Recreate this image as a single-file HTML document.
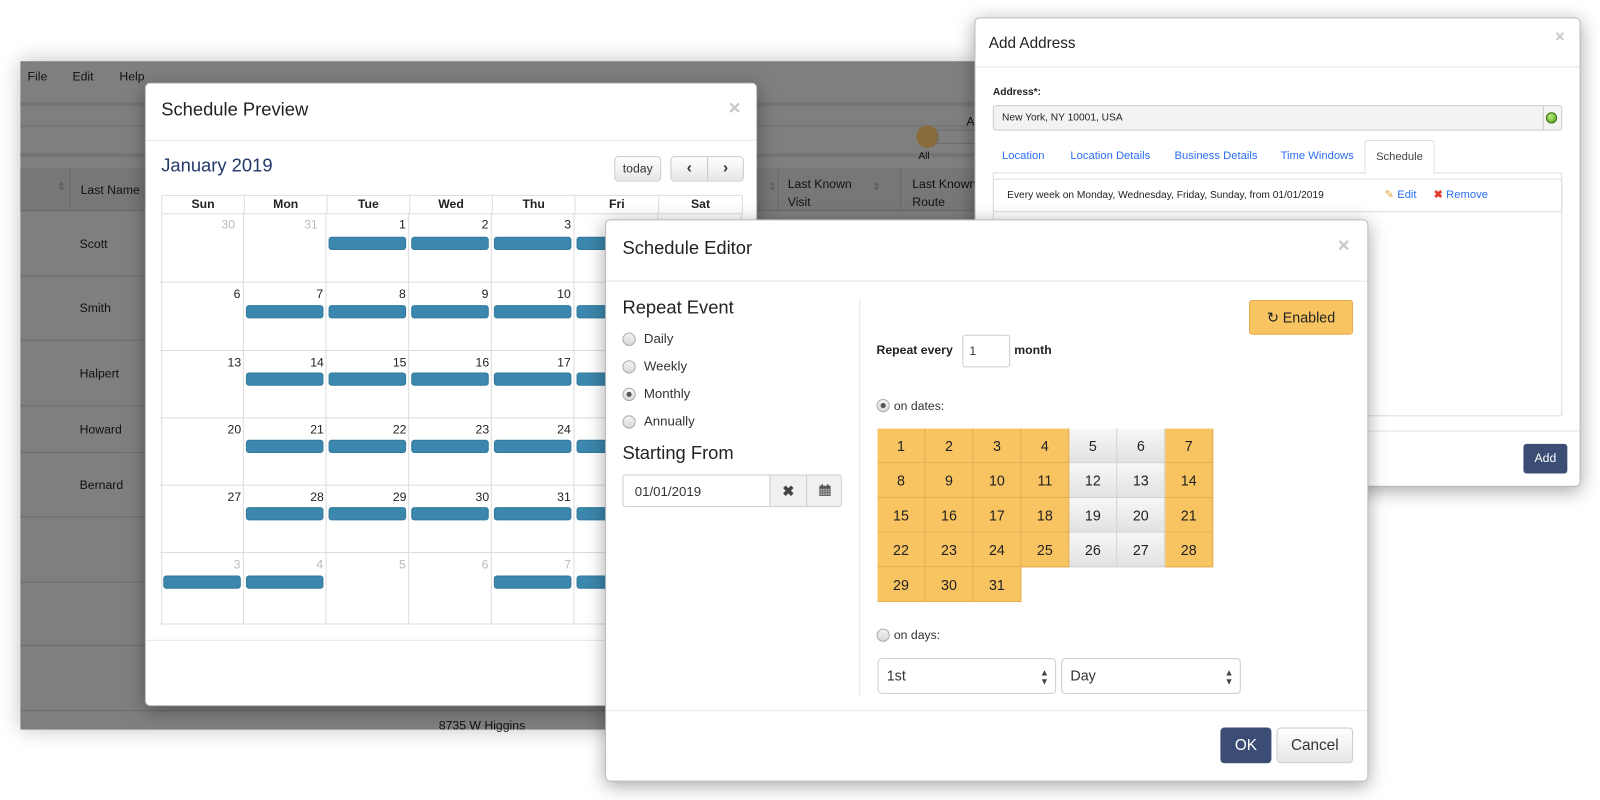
<!DOCTYPE html>
<html><head><meta charset="utf-8"><style>
*{box-sizing:border-box;margin:0;padding:0}
html,body{width:1600px;height:800px;overflow:hidden}
body{background:#fff;position:relative;font-family:"Liberation Sans",Arial,sans-serif;color:#333}
#w{position:absolute;left:0;top:0;width:1568px;height:784px;transform:scale(1.0204);transform-origin:0 0}
.a{position:absolute}
.bg{left:20px;top:60px;width:940px;height:655px;background:#7f7f7f;box-shadow:0 0 20px rgba(0,0,0,.25)}
.t{font-size:12px;color:#111}
.hl{height:1px;background:#6e6e6e}
.modal{background:#fff;border-radius:5px;box-shadow:0 4px 18px rgba(0,0,0,.35);border:1px solid #bbb}
.x{color:#c8c8c8;font-size:20px;font-weight:bold}
.cell{position:absolute;border-right:1px solid #ddd;border-bottom:1px solid #ddd}
.num{position:absolute;font-size:12px;right:5px;top:4px;color:#222}
.bar{position:absolute;height:13px;background:#3b87ad;border:1px solid #33799c;border-radius:3px}
.btn{position:absolute;border:1px solid #ccc;border-radius:4px;background:linear-gradient(#fff,#e6e6e6);font-size:12px;text-align:center}
.radio{position:absolute;width:13px;height:13px;border-radius:50%;border:1px solid #aaa;background:linear-gradient(#f4f4f4,#d8d8d8)}
.radio.on::after{content:"";position:absolute;left:3px;top:3px;width:5px;height:5px;border-radius:50%;background:#555}
.d{position:absolute;width:47px;height:34px;font-size:14px;text-align:center;line-height:34px;color:#222;border-right:1px solid #e2ad4e;border-bottom:1px solid #e2ad4e;background:#f8c462}
.d.g{background:linear-gradient(#f7f7f7,#e2e2e2);border-color:#ccc}
.tab{position:absolute;font-size:11px;color:#2a6ef5;top:146px}
</style></head><body><div id="w">

<div class="a bg">
 <div class="a t" style="left:7px;top:8px">File</div>
 <div class="a t" style="left:51px;top:8px">Edit</div>
 <div class="a t" style="left:97px;top:8px">Help</div>
 <div class="a" style="left:0;top:40px;width:940px;height:4px;background:#747474"></div>
 <div class="a hl" style="left:0;top:63px;width:940px"></div>
 <div class="a" style="left:0;top:90px;width:940px;height:4px;background:#747474"></div>
 <div class="a" style="left:0;top:105px;width:940px;height:42px;background:#777;border-bottom:1px solid #6a6a6a"></div>
 <div class="a" style="left:48px;top:105px;width:1px;height:42px;background:#6a6a6a"></div>
 <div class="a t" style="left:36px;top:118px;color:#555;font-size:10px">⇕</div>
 <div class="a t" style="left:59px;top:119px">Last Name</div>
 <div class="a t" style="left:752px;top:111px;line-height:18px">Last Known<br>Visit</div>
 <div class="a t" style="left:835px;top:118px;color:#555;font-size:10px">⇕</div>
 <div class="a" style="left:862px;top:105px;width:1px;height:42px;background:#6a6a6a"></div>
 <div class="a t" style="left:733px;top:118px;color:#555;font-size:10px">⇕</div>
 <div class="a" style="left:742px;top:105px;width:1px;height:42px;background:#6a6a6a"></div>
 <div class="a t" style="left:874px;top:111px;line-height:18px">Last Known<br>Route</div>
 <div class="a" style="left:878px;top:63px;width:22px;height:22px;border-radius:50%;background:#8a6b3c"></div>
 <div class="a" style="left:898px;top:67px;width:40px;height:14px;border:1px solid #6a6a6a;border-right:0"></div>
 <div class="a t" style="left:880px;top:88px;font-size:10px">All</div>
 <div class="a t" style="left:927px;top:52px">A</div>
 <div class="a t" style="left:58px;top:172px">Scott</div>
 <div class="a t" style="left:58px;top:235px">Smith</div>
 <div class="a t" style="left:58px;top:299px">Halpert</div>
 <div class="a t" style="left:58px;top:354px">Howard</div>
 <div class="a t" style="left:58px;top:408px">Bernard</div>
 <div class="a hl" style="left:0;top:210px;width:940px"></div>
 <div class="a hl" style="left:0;top:273px;width:940px"></div>
 <div class="a hl" style="left:0;top:337px;width:940px"></div>
 <div class="a hl" style="left:0;top:383px;width:940px"></div>
 <div class="a hl" style="left:0;top:446px;width:940px"></div>
 <div class="a hl" style="left:0;top:510px;width:940px"></div>
 <div class="a hl" style="left:0;top:572px;width:940px"></div>
 <div class="a hl" style="left:0;top:636px;width:940px"></div>
 <div class="a t" style="left:410px;top:644px">8735 W Higgins</div>
</div>

<div class="a modal" style="left:142px;top:81px;width:600px;height:611px">
 <div class="a" style="left:15px;top:15px;font-size:18px;color:#222">Schedule Preview</div>
 <div class="a x" style="left:571px;top:13px">×</div>
 <div class="a" style="left:0;top:55px;width:598px;height:1px;background:#e5e5e5"></div>
 <div class="a" style="left:15px;top:70px;font-size:18px;color:#22386a">January 2019</div>
 <div class="btn" style="left:459px;top:71px;width:46px;height:25px;line-height:23px">today</div>
 <div class="btn" style="left:514px;top:71px;width:37px;height:25px;line-height:22px;font-size:15px;font-weight:bold;border-radius:4px 0 0 4px">‹</div>
 <div class="btn" style="left:550px;top:71px;width:36px;height:25px;line-height:22px;font-size:15px;font-weight:bold;border-radius:0 4px 4px 0">›</div>
 <div class="a" style="left:15px;top:109px;width:570px;height:422px;border-left:1px solid #ddd;border-top:1px solid #ddd">
  <div class="a" style="left:0;top:0;width:569px;height:18px;font-size:12px;font-weight:bold;color:#222">
   <div class="cell" style="left:0;width:81px;height:18px;text-align:center;line-height:17px">Sun</div>
   <div class="cell" style="left:81px;width:81px;height:18px;text-align:center;line-height:17px">Mon</div>
   <div class="cell" style="left:162px;width:81px;height:18px;text-align:center;line-height:17px">Tue</div>
   <div class="cell" style="left:243px;width:81px;height:18px;text-align:center;line-height:17px">Wed</div>
   <div class="cell" style="left:324px;width:81px;height:18px;text-align:center;line-height:17px">Thu</div>
   <div class="cell" style="left:405px;width:82px;height:18px;text-align:center;line-height:17px">Fri</div>
   <div class="cell" style="left:487px;width:82px;height:18px;text-align:center;line-height:17px">Sat</div>
  </div>
 </div>
</div>
<div class="a" style="left:157px;top:209px;width:570px;height:403px">
 <div class="a" style="left:81px;top:0;width:1px;height:403px;background:#ddd"></div>
 <div class="a" style="left:162px;top:0;width:1px;height:403px;background:#ddd"></div>
 <div class="a" style="left:243px;top:0;width:1px;height:403px;background:#ddd"></div>
 <div class="a" style="left:324px;top:0;width:1px;height:403px;background:#ddd"></div>
 <div class="a" style="left:405px;top:0;width:1px;height:403px;background:#ddd"></div>
 <div class="a" style="left:487px;top:0;width:1px;height:403px;background:#ddd"></div>
 <div class="a" style="left:569px;top:0;width:1px;height:403px;background:#ddd"></div>
 <div class="a" style="left:0;top:67px;width:570px;height:1px;background:#ddd"></div>
 <div class="a" style="left:0;top:134px;width:570px;height:1px;background:#ddd"></div>
 <div class="a" style="left:0;top:200px;width:570px;height:1px;background:#ddd"></div>
 <div class="a" style="left:0;top:266px;width:570px;height:1px;background:#ddd"></div>
 <div class="a" style="left:0;top:332px;width:570px;height:1px;background:#ddd"></div>
 <div class="a" style="left:0;top:402px;width:570px;height:1px;background:#ddd"></div>
 <div class="num" style="left:60px;top:4px;color:#bbb">30</div>
 <div class="num" style="left:141px;top:4px;color:#bbb">31</div>
 <div class="num" style="left:234px;top:4px">1</div>
 <div class="num" style="left:315px;top:4px">2</div>
 <div class="num" style="left:396px;top:4px">3</div>
 <div class="bar" style="left:165px;top:23px;width:76px"></div><div class="bar" style="left:246px;top:23px;width:76px"></div><div class="bar" style="left:327px;top:23px;width:76px"></div><div class="bar" style="left:408px;top:23px;width:76px"></div>
 <div class="num" style="left:72px;top:72px">6</div><div class="num" style="left:153px;top:72px">7</div><div class="num" style="left:234px;top:72px">8</div><div class="num" style="left:315px;top:72px">9</div><div class="num" style="left:389px;top:72px">10</div>
 <div class="bar" style="left:84px;top:90px;width:76px"></div><div class="bar" style="left:165px;top:90px;width:76px"></div><div class="bar" style="left:246px;top:90px;width:76px"></div><div class="bar" style="left:327px;top:90px;width:76px"></div><div class="bar" style="left:408px;top:90px;width:76px"></div>
 <div class="num" style="left:66px;top:139px">13</div><div class="num" style="left:147px;top:139px">14</div><div class="num" style="left:228px;top:139px">15</div><div class="num" style="left:309px;top:139px">16</div><div class="num" style="left:389px;top:139px">17</div>
 <div class="bar" style="left:84px;top:156px;width:76px"></div><div class="bar" style="left:165px;top:156px;width:76px"></div><div class="bar" style="left:246px;top:156px;width:76px"></div><div class="bar" style="left:327px;top:156px;width:76px"></div><div class="bar" style="left:408px;top:156px;width:76px"></div>
 <div class="num" style="left:66px;top:205px">20</div><div class="num" style="left:147px;top:205px">21</div><div class="num" style="left:228px;top:205px">22</div><div class="num" style="left:309px;top:205px">23</div><div class="num" style="left:389px;top:205px">24</div>
 <div class="bar" style="left:84px;top:222px;width:76px"></div><div class="bar" style="left:165px;top:222px;width:76px"></div><div class="bar" style="left:246px;top:222px;width:76px"></div><div class="bar" style="left:327px;top:222px;width:76px"></div><div class="bar" style="left:408px;top:222px;width:76px"></div>
 <div class="num" style="left:66px;top:271px">27</div><div class="num" style="left:147px;top:271px">28</div><div class="num" style="left:228px;top:271px">29</div><div class="num" style="left:309px;top:271px">30</div><div class="num" style="left:389px;top:271px">31</div>
 <div class="bar" style="left:84px;top:288px;width:76px"></div><div class="bar" style="left:165px;top:288px;width:76px"></div><div class="bar" style="left:246px;top:288px;width:76px"></div><div class="bar" style="left:327px;top:288px;width:76px"></div><div class="bar" style="left:408px;top:288px;width:76px"></div>
 <div class="num" style="left:72px;top:337px;color:#bbb">3</div><div class="num" style="left:153px;top:337px;color:#bbb">4</div><div class="num" style="left:234px;top:337px;color:#bbb">5</div><div class="num" style="left:315px;top:337px;color:#bbb">6</div><div class="num" style="left:396px;top:337px;color:#bbb">7</div>
 <div class="bar" style="left:3px;top:355px;width:76px"></div><div class="bar" style="left:84px;top:355px;width:76px"></div><div class="bar" style="left:327px;top:355px;width:76px"></div><div class="bar" style="left:408px;top:355px;width:76px"></div>
</div>
<div class="a" style="left:143px;top:627px;width:598px;height:1px;background:#e5e5e5"></div>

<div class="a modal" style="left:955px;top:17px;width:594px;height:460px">
 <div class="a" style="left:13px;top:16px;font-size:15px;color:#222">Add Address</div>
 <div class="a x" style="left:568px;top:10px;font-size:16px">×</div>
 <div class="a" style="left:0;top:47px;width:592px;height:1px;background:#e5e5e5"></div>
 <div class="a" style="left:17px;top:67px;font-size:10px;font-weight:bold;color:#222">Address*:</div>
 <div class="a" style="left:17px;top:85px;width:558px;height:25px;background:#f3f3f3;border:1px solid #ccc;border-radius:3px;font-size:10px;line-height:23px;padding-left:8px;color:#222">New York, NY 10001, USA</div>
 <div class="a" style="left:556px;top:85px;width:1px;height:25px;background:#ccc"></div>
 <div class="a" style="left:559px;top:92px;width:11px;height:11px;border-radius:50%;background:radial-gradient(circle at 40% 35%,#b9f07a,#4e9b16);border:1px solid #3e6e14"></div>
 <div class="a" style="left:17px;top:151px;width:558px;height:1px;background:#ddd"></div>
 <div class="a" style="left:381px;top:119px;width:69px;height:34px;background:#fff;border:1px solid #ddd;border-bottom:0;border-radius:4px 4px 0 0;font-size:11px;text-align:center;line-height:32px;color:#444">Schedule</div>
 <div class="tab" style="left:26px;top:129px">Location</div>
 <div class="tab" style="left:93px;top:129px">Location Details</div>
 <div class="tab" style="left:195px;top:129px">Business Details</div>
 <div class="tab" style="left:299px;top:129px">Time Windows</div>
 <div class="a" style="left:17px;top:152px;width:558px;height:238px;border:1px solid #ddd;border-top:0"></div>
 <div class="a" style="left:17px;top:157px;width:558px;height:33px;border:1px solid #ddd;border-radius:3px;font-size:10px;line-height:31px;padding-left:13px;color:#222">Every week on Monday, Wednesday, Friday, Sunday, from 01/01/2019</div>
 <div class="a" style="left:401px;top:166px;font-size:11px;color:#2a6ef5"><span style="color:#e0a53a">✎</span> Edit</div>
 <div class="a" style="left:449px;top:166px;font-size:11px;color:#2a6ef5"><span style="color:#e53b2c;font-weight:bold">✖</span> Remove</div>
 <div class="a" style="left:0;top:404px;width:592px;height:1px;background:#e5e5e5"></div>
 <div class="a" style="left:537px;top:417px;width:43px;height:29px;background:#3b4c75;border-radius:3px;color:#fff;font-size:12px;text-align:center;line-height:29px">Add</div>
</div>

<div class="a modal" style="left:593px;top:215px;width:748px;height:551px">
 <div class="a" style="left:16px;top:17px;font-size:18px;color:#222">Schedule Editor</div>
 <div class="a x" style="left:717px;top:14px">×</div>
 <div class="a" style="left:0;top:59px;width:746px;height:1px;background:#e5e5e5"></div>
 <div class="a" style="left:16px;top:75px;font-size:18px;color:#222">Repeat Event</div>
 <div class="radio" style="left:16px;top:110px"></div><div class="a" style="left:37px;top:108px;font-size:13px">Daily</div>
 <div class="radio" style="left:16px;top:137px"></div><div class="a" style="left:37px;top:135px;font-size:13px">Weekly</div>
 <div class="radio on" style="left:16px;top:164px"></div><div class="a" style="left:37px;top:162px;font-size:13px">Monthly</div>
 <div class="radio" style="left:16px;top:191px"></div><div class="a" style="left:37px;top:189px;font-size:13px">Annually</div>
 <div class="a" style="left:16px;top:218px;font-size:18px;color:#222">Starting From</div>
 <div class="a" style="left:16px;top:249px;width:215px;height:32px;border:1px solid #ccc;border-radius:3px;overflow:hidden">
  <div class="a" style="left:11px;top:8px;font-size:13px;color:#333">01/01/2019</div>
  <div class="a" style="left:143px;top:0;width:36px;height:30px;border-left:1px solid #ccc;background:#f0f0f0;text-align:center;line-height:30px;font-size:14px;color:#444;font-weight:bold">✖</div>
  <div class="a" style="left:179px;top:0;width:36px;height:30px;border-left:1px solid #ccc;background:#f0f0f0">
   <svg class="a" style="left:11px;top:8px" width="13" height="13" viewBox="0 0 13 13"><rect x="1" y="2" width="11" height="10" fill="#555"/><rect x="2" y="5" width="9" height="6" fill="#bbb"/><path d="M2 7h9M2 9h9M4 5v6M6.5 5v6M9 5v6" stroke="#555" stroke-width=".7"/><rect x="3" y="0.5" width="1.5" height="3" fill="#555"/><rect x="8.5" y="0.5" width="1.5" height="3" fill="#555"/></svg>
  </div>
 </div>
 <div class="a" style="left:248px;top:77px;width:1px;height:388px;background:#e5e5e5"></div>
 <div class="a" style="left:630px;top:78px;width:102px;height:34px;background:#f8c462;border:1px solid #e2ad4e;border-radius:3px;font-size:14px;line-height:32px;text-align:center;color:#222">&#8635; Enabled</div>
 <div class="a" style="left:265px;top:120px;font-size:12px;font-weight:bold;color:#222">Repeat every</div>
 <div class="a" style="left:349px;top:112px;width:47px;height:32px;border:1px solid #ccc;border-radius:3px;font-size:12px;line-height:30px;padding-left:6px">1</div>
 <div class="a" style="left:400px;top:120px;font-size:12px;font-weight:bold;color:#222">month</div>
 <div class="radio on" style="left:265px;top:175px"></div><div class="a" style="left:282px;top:175px;font-size:12px">on dates:</div>
 <div class="a" style="left:266px;top:204px;width:330px;height:171px">
  <div class="d" style="left:0;top:0">1</div><div class="d" style="left:47px;top:0">2</div><div class="d" style="left:94px;top:0">3</div><div class="d" style="left:141px;top:0">4</div><div class="d g" style="left:188px;top:0">5</div><div class="d g" style="left:235px;top:0">6</div><div class="d" style="left:282px;top:0">7</div>
  <div class="d" style="left:0;top:34px">8</div><div class="d" style="left:47px;top:34px">9</div><div class="d" style="left:94px;top:34px">10</div><div class="d" style="left:141px;top:34px">11</div><div class="d g" style="left:188px;top:34px">12</div><div class="d g" style="left:235px;top:34px">13</div><div class="d" style="left:282px;top:34px">14</div>
  <div class="d" style="left:0;top:68px">15</div><div class="d" style="left:47px;top:68px">16</div><div class="d" style="left:94px;top:68px">17</div><div class="d" style="left:141px;top:68px">18</div><div class="d g" style="left:188px;top:68px">19</div><div class="d g" style="left:235px;top:68px">20</div><div class="d" style="left:282px;top:68px">21</div>
  <div class="d" style="left:0;top:102px">22</div><div class="d" style="left:47px;top:102px">23</div><div class="d" style="left:94px;top:102px">24</div><div class="d" style="left:141px;top:102px">25</div><div class="d g" style="left:188px;top:102px">26</div><div class="d g" style="left:235px;top:102px">27</div><div class="d" style="left:282px;top:102px">28</div>
  <div class="d" style="left:0;top:136px">29</div><div class="d" style="left:47px;top:136px">30</div><div class="d" style="left:94px;top:136px">31</div>
 </div>
 <div class="radio" style="left:265px;top:400px"></div><div class="a" style="left:282px;top:399px;font-size:12px">on days:</div>
 <div class="a" style="left:266px;top:429px;width:175px;height:35px;border:1px solid #ccc;border-radius:4px;background:#fff;font-size:14px;line-height:33px;padding-left:8px">1st<span class="a" style="right:6px;top:9px;font-size:9px;line-height:9px;color:#444">▲<br>▼</span></div>
 <div class="a" style="left:446px;top:429px;width:176px;height:35px;border:1px solid #ccc;border-radius:4px;background:#fff;font-size:14px;line-height:33px;padding-left:8px">Day<span class="a" style="right:6px;top:9px;font-size:9px;line-height:9px;color:#444">▲<br>▼</span></div>
 <div class="a" style="left:0;top:480px;width:746px;height:1px;background:#e5e5e5"></div>
 <div class="a" style="left:602px;top:497px;width:50px;height:35px;background:#3b4c75;border-radius:4px;color:#fff;font-size:15px;text-align:center;line-height:35px">OK</div>
 <div class="btn" style="left:657px;top:497px;width:75px;height:35px;line-height:33px;font-size:15px;color:#333">Cancel</div>
</div>
</div></body></html>
